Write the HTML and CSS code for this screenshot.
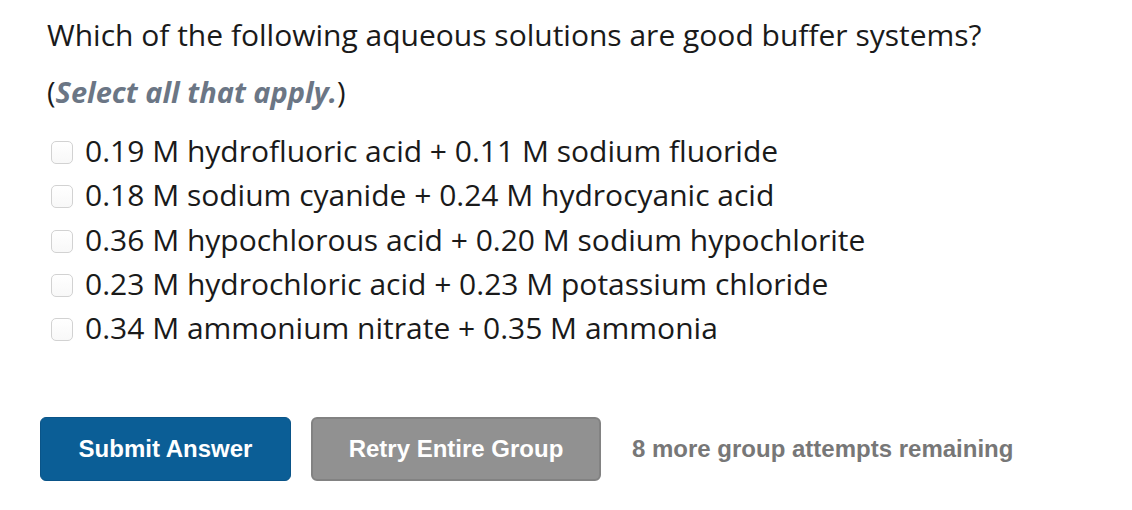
FILE: index.html
```html
<!DOCTYPE html>
<html>
<head>
<meta charset="utf-8">
<link rel="stylesheet" href="styles.css">
</head>
<body>
<div class="question">
  <p class="prompt">Which of the following aqueous solutions are good buffer systems?</p>
  <p class="hint">(<em>Select all that apply.</em>)</p>
  <ul class="choices">
    <li><span class="box"></span><span>0.19 M hydrofluoric acid + 0.11 M sodium fluoride</span></li>
    <li><span class="box"></span><span>0.18 M sodium cyanide + 0.24 M hydrocyanic acid</span></li>
    <li><span class="box"></span><span>0.36 M hypochlorous acid + 0.20 M sodium hypochlorite</span></li>
    <li><span class="box"></span><span>0.23 M hydrochloric acid + 0.23 M potassium chloride</span></li>
    <li><span class="box"></span><span>0.34 M ammonium nitrate + 0.35 M ammonia</span></li>
  </ul>
  <div class="actions">
    <button class="btn btn-primary">Submit Answer</button>
    <button class="btn btn-secondary">Retry Entire Group</button>
    <span class="attempts">8 more group attempts remaining</span>
  </div>
</div>
</body>
</html>
```
FILE: styles.css
```css
html, body {
  margin: 0;
  padding: 0;
  background: #fff;
}

.question {
  padding: 13px 0 0 47px;
  font-family: "Open Sans", sans-serif;
  color: #1a1a1a;
}

.prompt {
  margin: 0;
  font-size: 30px;
  line-height: 44px;
}

.hint {
  margin: 13px 0 0;
  font-size: 29px;
  line-height: 44px;
}

.hint em {
  font-weight: 700;
  color: #6b7685;
}

.choices {
  list-style: none;
  margin: 15px 0 0;
  padding: 0;
}

.choices li {
  display: flex;
  align-items: center;
  gap: 12px;
  font-size: 30px;
  line-height: 44.3px;
  margin-left: 4px;
}

.box {
  width: 22px;
  height: 23px;
  border: 1px solid #d2d2d2;
  border-radius: 5px;
  box-sizing: border-box;
  background: linear-gradient(#ffffff, #f8f8f8);
  flex: none;
  margin-top: 3px;
}

.actions {
  display: flex;
  align-items: center;
  margin: 67px 0 0 -7px;
}

.btn {
  font-family: "Liberation Sans", Arial, sans-serif;
  font-weight: 700;
  font-size: 24px;
  color: #fff;
  border: none;
  border-radius: 6px;
  height: 64px;
  padding: 0;
}

.btn-primary {
  width: 251px;
  background: #0b5e96;
  border: 1px solid #0a5488;
}

.btn-secondary {
  width: 290px;
  margin-left: 20px;
  background: #919191;
  border: 2px solid #828282;
}

.attempts {
  margin-left: 31px;
  font-family: "Liberation Sans", Arial, sans-serif;
  font-weight: 700;
  font-size: 24px;
  color: #777;
}
```
